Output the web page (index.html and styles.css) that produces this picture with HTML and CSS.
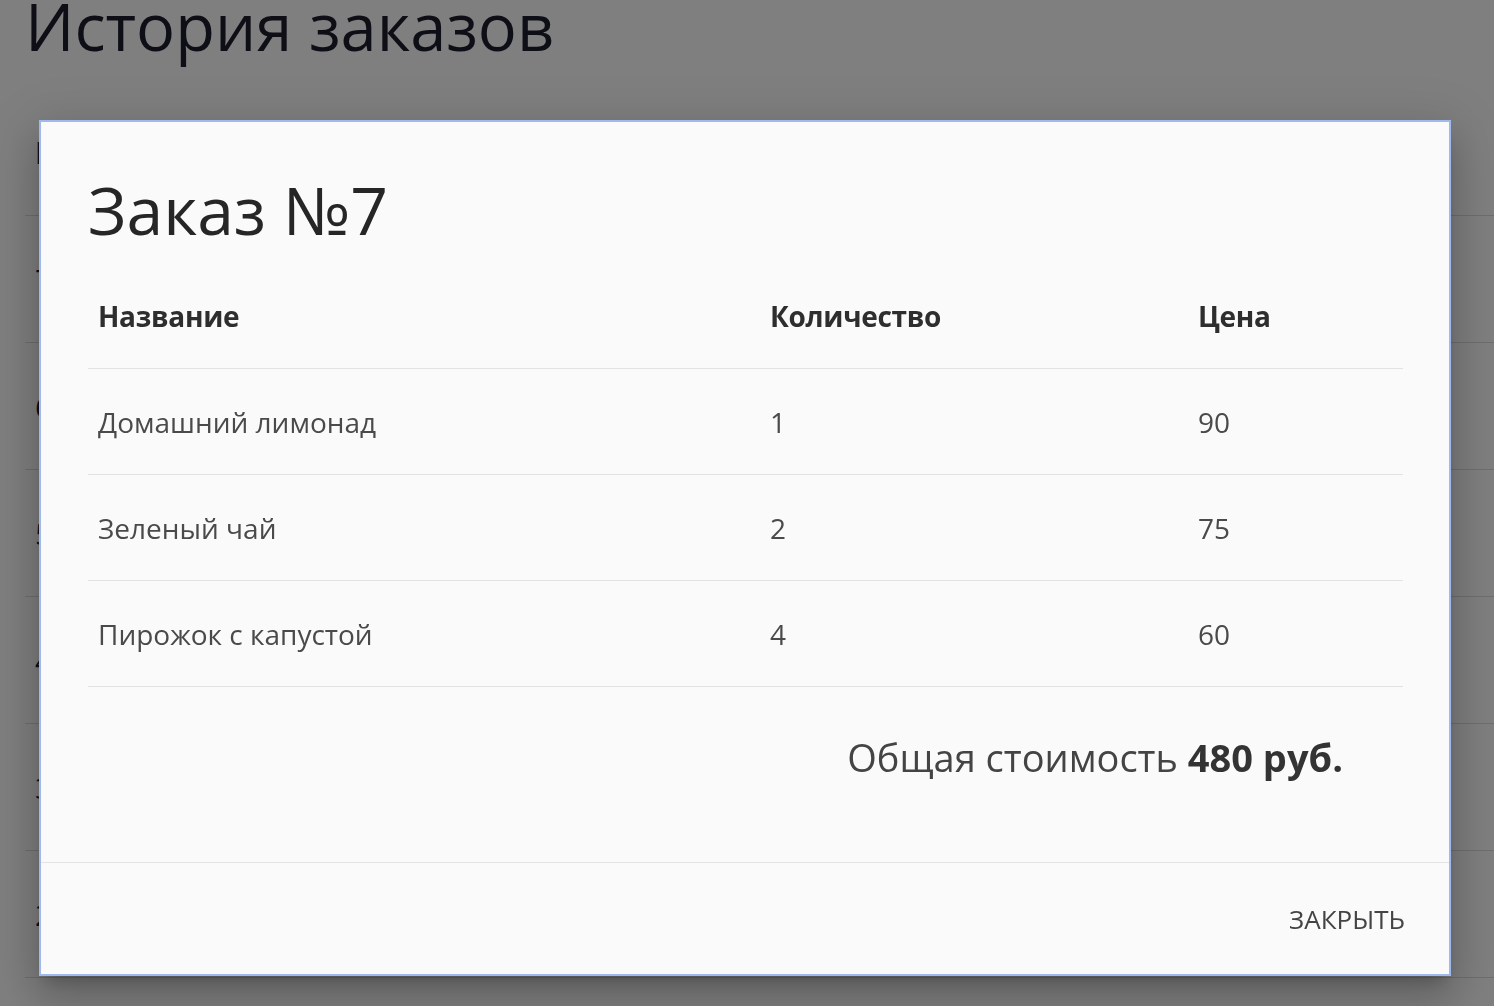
FILE: index.html
```html
<!DOCTYPE html>
<html lang="ru">
<head>
<meta charset="utf-8">
<title>История заказов</title>
<link rel="stylesheet" href="styles.css">
</head>
<body>
<main class="page">
  <h1 class="page-title">История заказов</h1>
  <table class="orders">
    <thead>
      <tr><th>Номер</th><th>Дата</th><th>Сумма</th><th></th></tr>
    </thead>
    <tbody>
      <tr><td>7</td><td></td><td></td><td></td></tr>
      <tr><td>6</td><td></td><td></td><td></td></tr>
      <tr><td>5</td><td></td><td></td><td></td></tr>
      <tr><td>4</td><td></td><td></td><td></td></tr>
      <tr><td>3</td><td></td><td></td><td></td></tr>
      <tr><td>2</td><td></td><td></td><td></td></tr>
    </tbody>
  </table>
</main>

<div class="overlay"></div>

<div class="modal">
  <div class="modal-content">
    <h4 class="modal-title">Заказ №7</h4>
    <table class="items">
      <thead>
        <tr><th class="c-name">Название</th><th class="c-qty">Количество</th><th class="c-price">Цена</th></tr>
      </thead>
      <tbody>
        <tr><td>Домашний лимонад</td><td>1</td><td>90</td></tr>
        <tr><td>Зеленый чай</td><td>2</td><td>75</td></tr>
        <tr><td>Пирожок с капустой</td><td>4</td><td>60</td></tr>
      </tbody>
    </table>
    <p class="total">Общая стоимость <b>480 руб.</b></p>
  </div>
  <div class="modal-footer">
    <a class="btn-flat" href="#">Закрыть</a>
  </div>
</div>
</body>
</html>
```

FILE: styles.css
```css
html, body {
  margin: 0;
  padding: 0;
  height: 100%;
  overflow: hidden;
}
body {
  background: #ffffff;
  font-family: "Open Sans", "Noto Sans", sans-serif;
  color: rgba(0,0,0,0.87);
}
.page {
  padding-left: 25px;
}
.page-title {
  margin: -6px 0 0 0;
  font-size: 65px;
  line-height: 64px;
  font-weight: 400;
  color: #1c1c2c;
  height: 95px;
}
.orders {
  width: 100%;
  border-collapse: collapse;
}
.orders th, .orders td {
  height: 126px;
  padding: 0 10px;
  text-align: left;
  font-size: 30px;
  border-bottom: 1px solid #dcdcdc;
  color: #1a1a3a;
}
.overlay {
  position: fixed;
  inset: 0;
  background: rgba(0,0,0,0.5);
}
.modal {
  position: absolute;
  left: 39px;
  top: 120px;
  width: 1408px;
  height: 852px;
  background: #fafafa;
  border: 2px solid #9fb9ec;
  box-shadow: 0 24px 38px 3px rgba(0,0,0,0.14), 0 9px 46px 8px rgba(0,0,0,0.12), 0 11px 15px -7px rgba(0,0,0,0.2);
  display: flex;
  flex-direction: column;
}
.modal-content {
  flex: 1;
  padding: 48px 46px 0 47px;
}
.modal-title {
  margin: 0 0 15px 0;
  font-size: 66px;
  line-height: 78px;
  font-weight: 400;
  color: #262626;
}
.items {
  width: 100%;
  border-collapse: collapse;
}
.items th, .items td {
  height: 105px;
  padding: 0 10px;
  text-align: left;
  border-bottom: 1px solid #e2e2e2;
  font-size: 28px;
}
.items th {
  font-weight: 700;
  color: #2e2e2e;
  letter-spacing: -0.3px;
}
.items td {
  color: #4a4a4a;
}
.c-name { width: 652px; }
.c-qty { width: 408px; }
.total {
  margin: 44px 60px 0 0;
  text-align: right;
  font-size: 38px;
  color: #444;
}
.total b {
  color: #333;
}
.modal-footer {
  height: 111px;
  border-top: 1px solid #e4e4e4;
  display: flex;
  align-items: center;
  justify-content: flex-end;
  padding-right: 12px;
}
.btn-flat {
  padding: 0 32px;
  line-height: 72px;
  text-transform: uppercase;
  text-decoration: none;
  font-size: 26px;
  color: #444;
}
```
